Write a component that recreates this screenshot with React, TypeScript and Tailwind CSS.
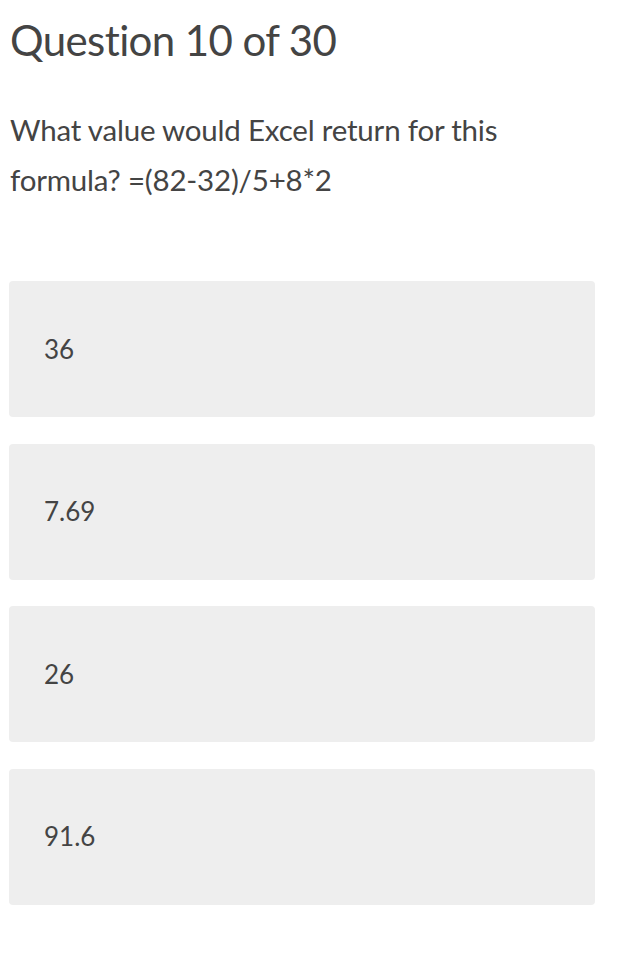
import React from 'react';

const options = ['36', '7.69', '26', '91.6'];

export default function App() {
    return (
        <div className="min-h-screen bg-white text-[#444444]" style={{ fontFamily: 'Lato, "Open Sans", sans-serif' }}>
            <div className="pl-[10px] pr-[23px] pt-[13px]">
                <h1 className="text-[42px] leading-[54px] font-normal tracking-[-0.6px]">Question 10 of 30</h1>

                <p className="mt-[38px] text-[29.5px] leading-[50px] tracking-[-0.2px]">
                    What value would Excel return for this formula? =(82-32)/5+8*2
                </p>

                <div className="mt-[76px] -ml-px flex flex-col gap-[26.5px]">
                    {options.map((opt) => (
                        <button
                            key={opt}
                            className="h-[136px] w-full rounded-[4px] bg-[#eeeeee] pl-[35px] text-left text-[26px]"
                        >
                            {opt}
                        </button>
                    ))}
                </div>
            </div>
        </div>
    );
}
